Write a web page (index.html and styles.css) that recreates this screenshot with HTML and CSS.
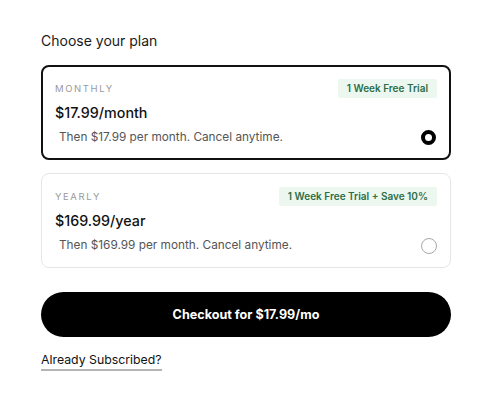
FILE: index.html
```html
<!DOCTYPE html>
<html>
<head>
<meta charset="utf-8">
<link rel="stylesheet" href="styles.css">
</head>
<body>
<main class="page">
  <h1 class="title">Choose your plan</h1>
  <div class="plans">
    <div class="plan plan--selected">
      <div class="plan__top">
        <span class="plan__label">MONTHLY</span>
        <span class="badge">1 Week Free Trial</span>
      </div>
      <div class="plan__price">$17.99/month</div>
      <div class="plan__bottom">
        <span class="plan__note">Then $17.99 per month. Cancel anytime.</span>
        <span class="radio radio--on"></span>
      </div>
    </div>
    <div class="plan">
      <div class="plan__top">
        <span class="plan__label">YEARLY</span>
        <span class="badge">1 Week Free Trial + Save 10%</span>
      </div>
      <div class="plan__price">$169.99/year</div>
      <div class="plan__bottom">
        <span class="plan__note">Then $169.99 per month. Cancel anytime.</span>
        <span class="radio"></span>
      </div>
    </div>
  </div>
  <button class="checkout">Checkout for $17.99/mo</button>
  <a class="subscribed" href="#">Already Subscribed?</a>
</main>
</body>
</html>
```
FILE: styles.css
```css
* { box-sizing: border-box; }
html, body { margin: 0; padding: 0; background: #fff; }
body {
  font-family: Inter, "Noto Sans", "Liberation Sans", sans-serif;
  color: #111;
}
.page {
  width: 410px;
  margin-left: 41px;
  padding-top: 33px;
  display: flex;
  flex-direction: column;
  align-items: flex-start;
}
.title {
  margin: 0;
  font-size: 14px;
  font-weight: 400;
  line-height: 16px;
  color: #1a1a1a;
}
.plans {
  margin-top: 16px;
  width: 100%;
  display: flex;
  flex-direction: column;
  gap: 13px;
}
.plan {
  height: 95px;
  border: 1px solid #e6e6e6;
  border-radius: 8px;
  padding: 13px 13px 13px 13px;
  display: flex;
  flex-direction: column;
}
.plan--selected {
  border: 2px solid #111;
  padding: 12px 12px 12px 12px;
}
.plan__top {
  height: 19px;
  display: flex;
  justify-content: space-between;
  align-items: center;
}
.plan__label {
  font-size: 9.5px;
  letter-spacing: 1.6px;
  color: #9a9a9a;
  line-height: 12px;
}
.badge {
  height: 19px;
  padding: 0 9px;
  background: #ecf7f0;
  color: #2d6e47;
  font-size: 10px;
  font-weight: 600;
  line-height: 19px;
  border-radius: 2px;
}
.plan__price {
  margin-top: 6px;
  font-size: 14.3px;
  font-weight: 500;
  line-height: 18px;
  color: #111;
}
.plan__bottom {
  margin-top: 7px;
  display: flex;
  justify-content: space-between;
  align-items: center;
  padding-left: 4px;
}
.plan__note {
  font-size: 11.8px;
  line-height: 15px;
  color: #555;
}
.radio {
  width: 16px;
  height: 16px;
  border-radius: 50%;
  border: 1.5px solid #a8a8a8;
  margin-top: 1px;
}
.radio--on {
  width: 15px;
  height: 15px;
  border: 4.5px solid #000;
  margin-right: 1px;
}
.checkout {
  margin-top: 24px;
  width: 100%;
  height: 45px;
  border: none;
  border-radius: 23px;
  background: #000;
  color: #fff;
  font-family: inherit;
  font-size: 12.6px;
  font-weight: 700;
  cursor: pointer;
}
.subscribed {
  margin-top: 14px;
  font-size: 12.3px;
  line-height: 17px;
  color: #111;
  text-decoration: none;
  border-bottom: 2px solid #b5b5b5;
  padding-bottom: 1px;
}
```
